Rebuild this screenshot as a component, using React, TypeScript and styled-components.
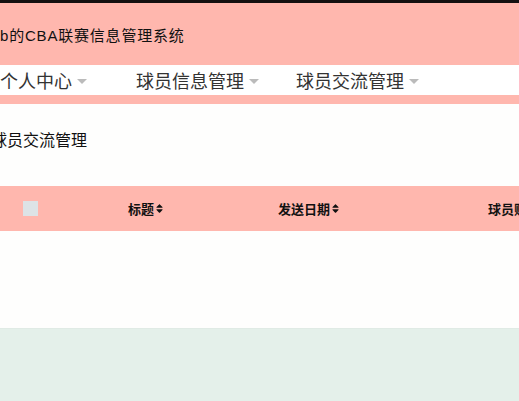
import styled, { createGlobalStyle } from "styled-components";
import { FaSort } from "react-icons/fa";

const GlobalStyle = createGlobalStyle`
  html, body {
    margin: 0;
    padding: 0;
    overflow: hidden;
    background: #e4f0ea;
  }
  body {
    font-family: "Liberation Sans", "Noto Sans CJK SC", sans-serif;
  }
`;

const menus = [
  { name: "个人中心", width: 136 },
  { name: "球员信息管理", width: 160 },
  { name: "球员交流管理", width: 160 },
];

const columns = [
  { title: "标题", width: 150 },
  { title: "发送日期", width: 210 },
  { title: "球员账号", width: 160 },
];

const App = () => {
  return (
    <>
      <GlobalStyle />
      <Page>
        <TopLine />
        <Header>
          <SiteTitle>b的CBA联赛信息管理系统</SiteTitle>
        </Header>
        <Nav>
          {menus.map((m) => (
            <NavItem key={m.name} $w={m.width}>
              {m.name}
              <Caret />
            </NavItem>
          ))}
        </Nav>
        <NavGap />
        <Content>
          <PageTitle>球员交流管理</PageTitle>
          <TableHead>
            <CheckCell>
              <Check />
            </CheckCell>
            {columns.map((c) => (
              <HeadCell key={c.title} $w={c.width}>
                {c.title}
                <FaSort size={11} />
              </HeadCell>
            ))}
          </TableHead>
          <TableBody />
        </Content>
      </Page>
    </>
  );
};

export default App;

const Page = styled.div`
  width: 519px;
  overflow: hidden;
`;

const TopLine = styled.div`
  height: 3px;
  background: #141010;
`;

const Header = styled.header`
  height: 62px;
  background: #ffb7ae;
  display: flex;
  align-items: center;
`;

const SiteTitle = styled.h1`
  margin: 0;
  font-size: 15px;
  font-weight: 400;
  letter-spacing: 0.8px;
  color: #111;
  white-space: nowrap;
`;

const Nav = styled.nav`
  height: 30px;
  background: #fff;
  display: flex;
  align-items: center;
`;

const NavItem = styled.div<{ $w: number }>`
  width: ${(p) => p.$w}px;
  flex-shrink: 0;
  display: flex;
  align-items: center;
  font-size: 18px;
  color: #333;
  white-space: nowrap;
`;

const Caret = styled.span`
  display: inline-block;
  margin-left: 5px;
  margin-top: 2px;
  width: 0;
  height: 0;
  border-left: 5px solid transparent;
  border-right: 5px solid transparent;
  border-top: 5px solid #bbb;
`;

const NavGap = styled.div`
  height: 9px;
  background: #ffb7ae;
`;

const Content = styled.main`
  background: #fefefd;
`;

const PageTitle = styled.h2`
  margin: 0 0 0 -9px;
  height: 82px;
  padding-top: 23px;
  box-sizing: border-box;
  font-size: 16px;
  font-weight: 400;
  color: #111;
  white-space: nowrap;
`;

const TableHead = styled.div`
  height: 45px;
  background: #ffb7ae;
  display: flex;
  align-items: center;
  white-space: nowrap;
`;

const CheckCell = styled.div`
  width: 128px;
  flex-shrink: 0;
  padding-left: 23px;
  box-sizing: border-box;
  display: flex;
  align-items: center;
`;

const Check = styled.span`
  width: 15px;
  height: 15px;
  background: #dde3e6;
`;

const HeadCell = styled.div<{ $w: number }>`
  width: ${(p) => p.$w}px;
  flex-shrink: 0;
  display: flex;
  align-items: center;
  font-size: 13px;
  font-weight: 700;
  color: #111;
`;

const TableBody = styled.div`
  height: 97px;
  background: #fefefd;
  border-bottom: 1px solid #e0ebe5;
`;
